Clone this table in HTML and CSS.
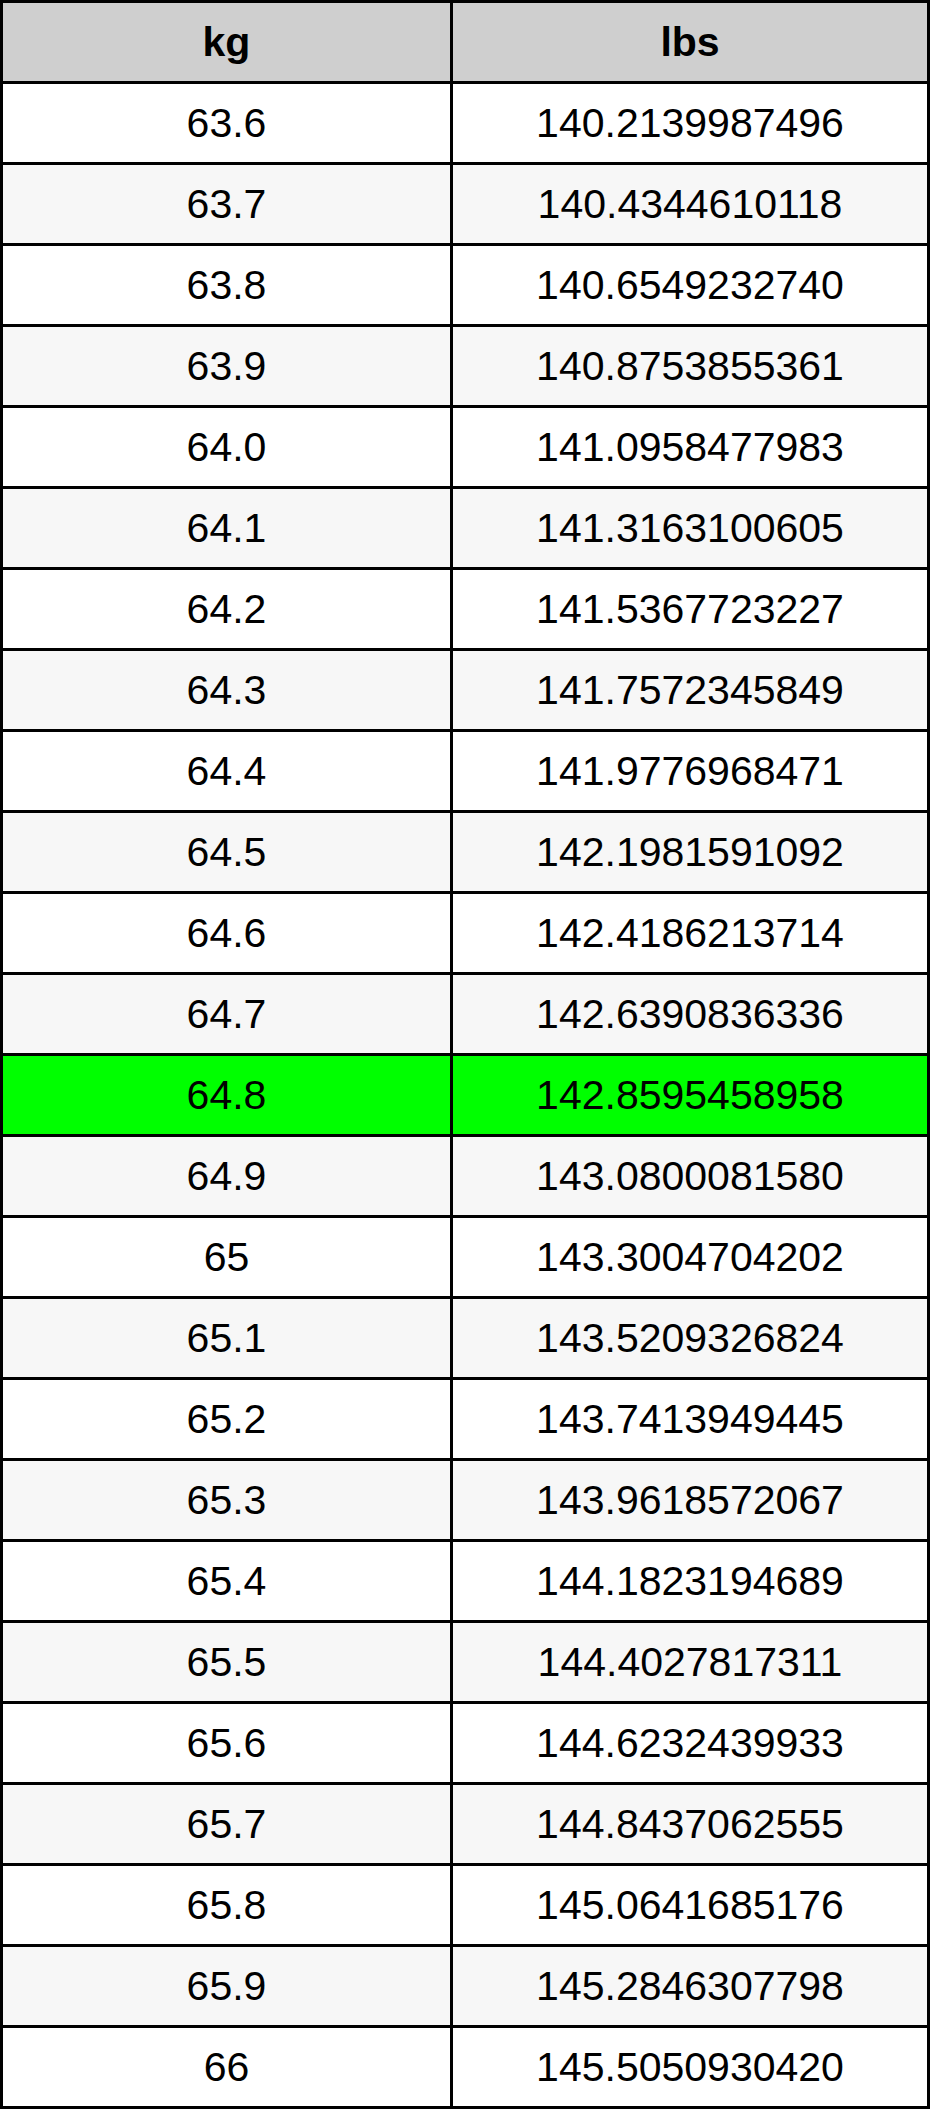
FILE: index.html
```html
<!DOCTYPE html>
<html>
<head>
<meta charset="utf-8">
<link rel="stylesheet" href="styles.css">
</head>
<body>
<table class="conv">
<colgroup><col class="c1"><col class="c2"></colgroup>
<thead>
<tr><th>kg</th><th>lbs</th></tr>
</thead>
<tbody>
<tr><td>63.6</td><td>140.2139987496</td></tr>
<tr><td>63.7</td><td>140.4344610118</td></tr>
<tr><td>63.8</td><td>140.6549232740</td></tr>
<tr><td>63.9</td><td>140.8753855361</td></tr>
<tr><td>64.0</td><td>141.0958477983</td></tr>
<tr><td>64.1</td><td>141.3163100605</td></tr>
<tr><td>64.2</td><td>141.5367723227</td></tr>
<tr><td>64.3</td><td>141.7572345849</td></tr>
<tr><td>64.4</td><td>141.9776968471</td></tr>
<tr><td>64.5</td><td>142.1981591092</td></tr>
<tr><td>64.6</td><td>142.4186213714</td></tr>
<tr><td>64.7</td><td>142.6390836336</td></tr>
<tr class="hl"><td>64.8</td><td>142.8595458958</td></tr>
<tr><td>64.9</td><td>143.0800081580</td></tr>
<tr><td>65</td><td>143.3004704202</td></tr>
<tr><td>65.1</td><td>143.5209326824</td></tr>
<tr><td>65.2</td><td>143.7413949445</td></tr>
<tr><td>65.3</td><td>143.9618572067</td></tr>
<tr><td>65.4</td><td>144.1823194689</td></tr>
<tr><td>65.5</td><td>144.4027817311</td></tr>
<tr><td>65.6</td><td>144.6232439933</td></tr>
<tr><td>65.7</td><td>144.8437062555</td></tr>
<tr><td>65.8</td><td>145.0641685176</td></tr>
<tr><td>65.9</td><td>145.2846307798</td></tr>
<tr><td>66</td><td>145.5050930420</td></tr>
</tbody>
</table>
</body>
</html>
```
FILE: styles.css
```css
html, body {
  margin: 0;
  padding: 0;
  background: #ffffff;
}

.conv {
  width: 930px;
  border-collapse: collapse;
  table-layout: fixed;
  font-family: "Liberation Sans", Arial, sans-serif;
  font-size: 41px;
  color: #000000;
  border: 3px solid #000000;
}

.conv .c1 {
  width: 450px;
}

.conv th,
.conv td {
  border: 3px solid #000000;
  height: 78px;
  padding: 0;
  text-align: center;
  vertical-align: middle;
  line-height: 1;
}

.conv th {
  background: #cfcfcf;
  font-weight: bold;
}

.conv tbody tr:nth-child(odd) td {
  background: #ffffff;
}

.conv tbody tr:nth-child(even) td {
  background: #f7f7f7;
}

.conv tbody tr.hl td {
  background: #00ff00;
}
```
